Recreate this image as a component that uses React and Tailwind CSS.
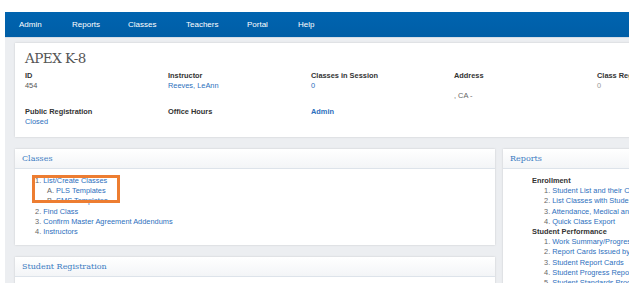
import React from 'react';

const navItems = ['Admin', 'Reports', 'Classes', 'Teachers', 'Portal', 'Help'];

const Field = ({ label, children, labelClass = 'text-[#333]' }) => (
  <div className="w-[143px] shrink-0">
    <div className={`font-bold leading-[10px] ${labelClass}`}>{label}</div>
    {children}
  </div>
);

const PanelHeader = ({ title }) => (
  <div className="h-[20px] pl-[7px] flex items-center bg-gradient-to-b from-white to-[#f3f5f7] border-b border-[#dde3ea] rounded-t-[2px]">
    <span className="text-[#3a7bc2] text-[8px] font-['DejaVu_Serif',serif]">{title}</span>
  </div>
);

const Item = ({ n, children }) => (
  <div className="leading-[10.2px] whitespace-nowrap">
    <span className="text-[#666]">{n}. </span>
    <span className="text-[#2c6fbd]">{children}</span>
  </div>
);

const App = () => {
  return (
    <div className="w-[643px] h-[300px] bg-white font-['Liberation_Sans',Arial,sans-serif] text-[7.4px]">
      <div className="ml-[5px] pt-[12px]">
        <div className="w-[624px] h-[271px] bg-[#eceef1] overflow-hidden">
          <nav className="h-[25px] bg-gradient-to-b from-[#0064b0] to-[#005ea6] flex items-center pl-[14px] text-white text-[8px]">
            {navItems.map((item, i) => (
              <span key={item} className={`${['w-[53px]', 'w-[56px]', 'w-[58px]', 'w-[61px]', 'w-[51px]', 'w-[40px]'][i]} shrink-0`}>
                {item}
              </span>
            ))}
          </nav>
          <div className="h-[1px] bg-[#d6dde6]" />

          <div className="pl-[10px] pt-[5px]">
            <div className="w-[640px] h-[94px] bg-white shadow-[0_0_2px_rgba(0,0,0,0.15)] pl-[10px] pt-[5px]">
              <div className="h-[20px] text-[13.5px] leading-[20px] text-[#555] font-['DejaVu_Serif',serif] tracking-[-0.5px]">APEX K-8</div>
              <div className="flex mt-[3px] h-[36px]">
                <Field label="ID"><div className="text-[#555] leading-[10px]">454</div></Field>
                <Field label="Instructor"><div className="text-[#2c6fbd] leading-[10px]">Reeves, LeAnn</div></Field>
                <Field label="Classes in Session"><div className="text-[#2c6fbd] leading-[10px]">0</div></Field>
                <Field label="Address">
                  <div className="leading-[10px] h-[10px]"></div>
                  <div className="text-[#666] leading-[10px]">, CA -</div>
                </Field>
                <Field label="Class Registration"><div className="text-[#999] leading-[10px]">0</div></Field>
              </div>
              <div className="flex">
                <Field label="Public Registration"><div className="text-[#2c6fbd] leading-[10px]">Closed</div></Field>
                <Field label="Office Hours" />
                <Field label="Admin" labelClass="text-[#2c6fbd]" />
              </div>
            </div>
          </div>

          <div className="flex pl-[10px] pt-[12px] gap-[8px]">
            <div className="w-[480px] shrink-0 flex flex-col gap-[12px]">
              <div className="relative h-[96px] bg-white shadow-[0_0_2px_rgba(0,0,0,0.15)]">
                <PanelHeader title="Classes" />
                <div className="pl-[20px] pt-[7px]">
                  <Item n="1">List/Create Classes</Item>
                  <div className="pl-[12px]">
                    <Item n="A">PLS Templates</Item>
                    <Item n="B">SMS Templates</Item>
                  </div>
                  <Item n="2">Find Class</Item>
                  <Item n="3">Confirm Master Agreement Addendums</Item>
                  <Item n="4">Instructors</Item>
                </div>
                <div className="absolute left-[17px] top-[26px] w-[88px] h-[28px] border-[3px] border-[#ed7d31]" />
              </div>
              <div className="h-[60px] bg-white shadow-[0_0_2px_rgba(0,0,0,0.15)]">
                <PanelHeader title="Student Registration" />
              </div>
            </div>
            <div className="w-[300px] shrink-0 h-[200px] bg-white shadow-[0_0_2px_rgba(0,0,0,0.15)]">
              <PanelHeader title="Reports" />
              <div className="pl-[29px] pt-[7px]">
                <div className="font-bold text-[#333] leading-[10.2px]">Enrollment</div>
                <div className="pl-[12px]">
                  <Item n="1">Student List and their Classes</Item>
                  <Item n="2">List Classes with Students</Item>
                  <Item n="3">Attendance, Medical and Emergency</Item>
                  <Item n="4">Quick Class Export</Item>
                </div>
                <div className="font-bold text-[#333] leading-[10.2px]">Student Performance</div>
                <div className="pl-[12px]">
                  <Item n="1">Work Summary/Progress</Item>
                  <Item n="2">Report Cards Issued by Term</Item>
                  <Item n="3">Student Report Cards</Item>
                  <Item n="4">Student Progress Reports</Item>
                  <Item n="5">Student Standards Progress</Item>
                </div>
              </div>
            </div>
          </div>
        </div>
      </div>
    </div>
  );
};

export default App;
